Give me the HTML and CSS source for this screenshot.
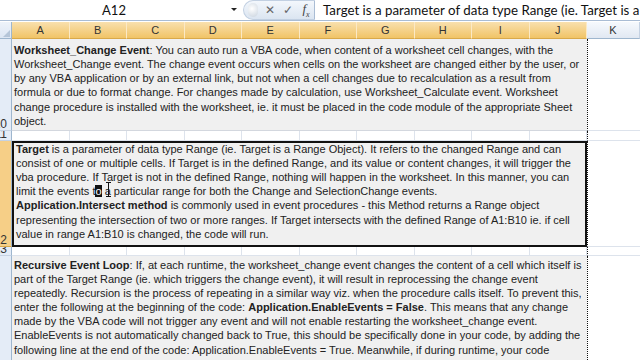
FILE: index.html
```html
<!DOCTYPE html>
<html lang="en">
<head>
    <meta charset="UTF-8">
    <title>Worksheet_Change Event</title>
    <link rel="stylesheet" href="styles.css">
</head>
<body>
    <div class="formula-bar">
        <div class="name-box">A12</div>
        <div class="name-drop"></div>
        <div class="fx-buttons">
            <span class="fx-knob"></span>
            <span class="fx-btn">&#x2715;</span>
            <span class="fx-btn">&#x2713;</span>
            <span class="fx-btn fx">f<sub>x</sub></span>
        </div>
        <div class="formula-input">Target is a parameter of data type Range (ie. Target is a Range Object). It refers to the changed Range and can consist of one or multiple cells.</div>
    </div>

    <div class="sheet">
        <div class="corner"></div>
        <div class="col-head active">A</div>
        <div class="col-head active">B</div>
        <div class="col-head active">C</div>
        <div class="col-head active">D</div>
        <div class="col-head active">E</div>
        <div class="col-head active">F</div>
        <div class="col-head active">G</div>
        <div class="col-head active">H</div>
        <div class="col-head active">I</div>
        <div class="col-head active">J</div>
        <div class="col-head">K</div>

        <!-- row 10 -->
        <div class="row-head">10</div>
        <div class="merged bottom">
            <p><b>Worksheet_Change Event</b>: You can auto run a VBA code, when content of a worksheet cell changes, with the<br>
            Worksheet_Change event. The change event occurs when cells on the worksheet are changed either by the user, or<br>
            by any VBA application or by an external link, but not when a cell changes due to recalculation as a result from<br>
            formula or due to format change. For changes made by calculation, use Worksheet_Calculate event. Worksheet<br>
            change procedure is installed with the worksheet, ie. it must be placed in the code module of the appropriate Sheet<br>
            object.</p>
        </div>
        <div class="cell page-break"></div>

        <!-- row 11 -->
        <div class="row-head">11</div>
        <div class="cell"></div><div class="cell"></div><div class="cell"></div><div class="cell"></div><div class="cell"></div>
        <div class="cell"></div><div class="cell"></div><div class="cell"></div><div class="cell"></div><div class="cell"></div>
        <div class="cell page-break"></div>

        <!-- row 12, selected -->
        <div class="row-head active">12</div>
        <div class="merged bottom selected">
            <p><b>Target</b> is a parameter of data type Range (ie. Target is a Range Object). It refers to the changed Range and can<br>
            consist of one or multiple cells. If Target is in the defined Range, and its value or content changes, it will trigger the<br>
            vba procedure. If Target is not in the defined Range, nothing will happen in the worksheet. In this manner, you can<br>
            limit the events t<span class="hl">o</span> a particular range for both the Change and SelectionChange events.<br>
            <b>Application.Intersect method</b> is commonly used in event procedures - this Method returns a Range object<br>
            representing the intersection of two or more ranges. If Target intersects with the defined Range of A1:B10 ie. if cell<br>
            value in range A1:B10 is changed, the code will run.</p>
            <span class="ibeam"></span>
        </div>
        <div class="cell page-break"></div>

        <!-- row 13 -->
        <div class="row-head">13</div>
        <div class="cell"></div><div class="cell"></div><div class="cell"></div><div class="cell"></div><div class="cell"></div>
        <div class="cell"></div><div class="cell"></div><div class="cell"></div><div class="cell"></div><div class="cell"></div>
        <div class="cell page-break"></div>

        <!-- row 14 -->
        <div class="row-head">14</div>
        <div class="merged top">
            <p><b>Recursive Event Loop</b>: If, at each runtime, the worksheet_change event changes the content of a cell which itself is<br>
            part of the Target Range (ie. which triggers the change event), it will result in reprocessing the change event<br>
            repeatedly. Recursion is the process of repeating in a similar way viz. when the procedure calls itself. To prevent this,<br>
            enter the following at the beginning of the code: <b>Application.EnableEvents = False</b>. This means that any change<br>
            made by the VBA code will not trigger any event and will not enable restarting the worksheet_change event.<br>
            EnableEvents is not automatically changed back to True, this should be specifically done in your code, by adding the<br>
            following line at the end of the code: Application.EnableEvents = True. Meanwhile, if during runtime, your code<br>
            encounters an error, you will need to run Application.EnableEvents = True to enable events again.</p>
        </div>
        <div class="cell page-break"></div>
    </div>
</body>
</html>
```

FILE: styles.css
```css
html, body {
    margin: 0;
    padding: 0;
    height: 360px;
    overflow: hidden;
    background-color: #fff;
}
body {
    font-family: "Liberation Sans", Arial, sans-serif;
    color: #222;
}

/* formula bar */
.formula-bar {
    display: flex;
    height: 20px;
    border-bottom: 1px solid #a9bcd4;
    margin-bottom: 1px;
    background-color: #fff;
}
.name-box {
    width: 228px;
    text-align: center;
    font-family: Lato, "Open Sans", sans-serif;
    font-size: 13px;
    line-height: 20px;
    color: #111;
}
.name-drop {
    width: 0;
    height: 0;
    margin: 8px 6px 0 3px;
    border-left: 3px solid transparent;
    border-right: 3px solid transparent;
    border-top: 3px solid #222;
}
.fx-buttons {
    display: flex;
    align-items: center;
    gap: 6px;
    width: 72px;
    padding-left: 4px;
    border-radius: 10px 0 0 10px;
    background: linear-gradient(#f3f7fc, #dbe5f1);
    border: 1px solid #c2d0e2;
    border-right: 1px solid #a9bcd4;
    box-sizing: border-box;
}
.fx-knob {
    width: 10px;
    height: 14px;
    border-radius: 7px;
    background: radial-gradient(circle at 40% 40%, #fff, #c9d3de);
}
.fx-btn {
    color: #666;
    font-size: 12px;
    width: 12px;
    text-align: center;
}
.fx-btn.fx {
    font-family: "Liberation Serif", serif;
    font-style: italic;
    font-size: 13px;
    color: #444;
}
.fx-btn.fx sub {
    font-size: 8px;
}
.formula-input {
    flex: 1;
    padding-left: 8px;
    font-family: Lato, "Open Sans", sans-serif;
    font-size: 13.3px;
    line-height: 20px;
    color: #111;
    white-space: nowrap;
    overflow: hidden;
}

/* worksheet grid */
.sheet {
    display: grid;
    grid-template-columns: 12px repeat(10, 57.5px) 1fr;
    grid-template-rows: 17px 92px 10px 106px 9px 140px;
}
.corner {
    background: linear-gradient(#eef3fa, #dce6f3);
    border-right: 1px solid #9eb6ce;
    border-bottom: 1px solid #9eb6ce;
    position: relative;
}
.corner::after {
    content: "";
    position: absolute;
    right: 1px;
    bottom: 1px;
    border-left: 7px solid transparent;
    border-bottom: 7px solid #b5c5d8;
}
.col-head {
    background: linear-gradient(#f9e0ae, #f1c467);
    border-right: 1px solid #fbe9c6;
    border-bottom: 1px solid #d9a94a;
    font-size: 11px;
    line-height: 16px;
    text-align: center;
    color: #333;
}
.col-head:not(.active) {
    background: linear-gradient(#f6f9fd, #e1e8f2);
    border-right: 1px solid #c5d2e3;
    border-bottom: 1px solid #9eb6ce;
}
.row-head {
    display: flex;
    justify-content: flex-end;
    align-items: flex-end;
    overflow: hidden;
    padding-right: 4px;
    background-color: #e4ecf7;
    border-right: 1px solid #9eb6ce;
    border-bottom: 1px solid #c5d2e3;
    font-size: 12px;
    line-height: 12px;
    color: #333;
}
.row-head.active {
    background-color: #f6cf87;
    border-bottom-color: #d9a94a;
}
.cell {
    border-right: 1px solid #dde3ec;
    border-bottom: 1px solid #dde3ec;
}
.cell.page-break {
    border-left: 1px dotted #111;
    border-right: none;
}
.merged {
    grid-column: 2 / 12;
    position: relative;
    display: flex;
    background-color: #f0f0f0;
    border-bottom: 1px solid #d3d7de;
    font-size: 11px;
    line-height: 14.2px;
    white-space: nowrap;
    overflow: hidden;
}
.merged p {
    margin: 0;
    padding-left: 2px;
}
.merged.bottom {
    align-items: flex-end;
    padding-bottom: 2px;
}
.merged.top {
    align-items: flex-start;
    padding-top: 2px;
    line-height: 14.1px;
}
.merged.selected {
    border: 2px solid #111;
    padding-bottom: 4px;
}
.hl {
    background-color: #111;
    color: #fff;
}
.ibeam {
    position: absolute;
    left: 92px;
    top: 39px;
    width: 5px;
    height: 15px;
    border-top: 1px solid #111;
    border-bottom: 1px solid #111;
    box-sizing: border-box;
}
.ibeam::after {
    content: "";
    position: absolute;
    left: 2px;
    top: 0;
    width: 1px;
    height: 13px;
    background-color: #111;
}
```
